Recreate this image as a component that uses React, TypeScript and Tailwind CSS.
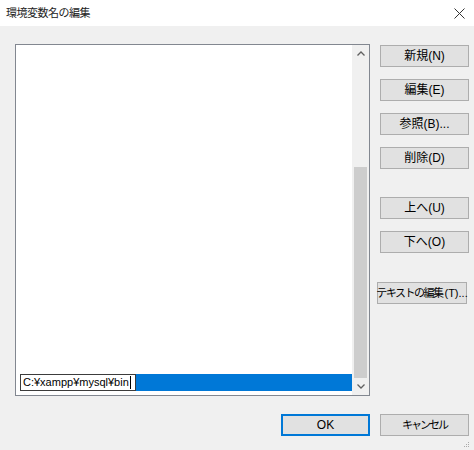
const font = { fontFamily: '"Liberation Sans", "Noto Sans CJK JP", sans-serif' };

const Btn = ({ children, className = "" }: { children: React.ReactNode; className?: string }) => (
  <div
    className={`h-[22px] flex items-center justify-center whitespace-nowrap bg-[#e1e1e1] border border-[#adadad] text-[12px] text-[#000] leading-none ${className}`}
  >
    {children}
  </div>
);

export default function App() {
  return (
    <div className="w-[474px] h-[450px] flex flex-col bg-[#f0f0f0] text-black" style={font}>
      <div className="h-[26px] bg-white flex items-center justify-between pl-[6px] pr-[9px] shrink-0">
        <span className="text-[11px] tracking-[-0.5px] text-[#222]">環境変数名の編集</span>
        <svg width="11" height="11" viewBox="0 0 11 11">
          <path d="M0.5 0.5 L10.5 10.5 M10.5 0.5 L0.5 10.5" stroke="#333" strokeWidth="1" />
        </svg>
      </div>

      <div className="flex-1 flex flex-col pl-[15px]">
        <div className="flex pt-[18px]">
          {/* list */}
          <div className="w-[355px] h-[352px] border border-[#828790] bg-white flex">
            <div className="flex-1 flex flex-col justify-end pb-[4px] pl-[4px]">
              <div className="h-[17px] flex items-stretch">
                <div className="w-[116px] shrink-0 border border-[#3c3c3c] bg-white flex items-center pl-[2px] text-[11px] leading-none whitespace-nowrap overflow-hidden">
                  C:¥xampp¥mysql¥bin
                  <span className="w-px h-[13px] bg-black ml-[1px] shrink-0" />
                </div>
                <div className="flex-1 bg-[#0078d7]" />
              </div>
            </div>
            <div className="w-[17px] bg-[#f0f0f0] flex flex-col">
              <div className="h-[17px] flex items-center justify-center">
                <svg width="8" height="5" viewBox="0 0 8 5">
                  <path d="M0.5 4.5 L4 1 L7.5 4.5" stroke="#606060" strokeWidth="1.3" fill="none" />
                </svg>
              </div>
              <div className="flex-1 flex flex-col px-[2px]">
                <div className="h-[105px]" />
                <div className="flex-1 bg-[#cdcdcd]" />
              </div>
              <div className="h-[17px] flex items-center justify-center">
                <svg width="8" height="5" viewBox="0 0 8 5">
                  <path d="M0.5 0.5 L4 4 L7.5 0.5" stroke="#606060" strokeWidth="1.3" fill="none" />
                </svg>
              </div>
            </div>
          </div>

          {/* buttons */}
          <div className="flex flex-col ml-[10px] pt-px">
            <Btn className="w-[89px]">新規(N)</Btn>
            <Btn className="w-[89px] mt-[12px]">編集(E)</Btn>
            <Btn className="w-[89px] mt-[12px]">参照(B)...</Btn>
            <Btn className="w-[89px] mt-[12px]">削除(D)</Btn>
            <Btn className="w-[89px] mt-[28px]">上へ(U)</Btn>
            <Btn className="w-[89px] mt-[12px]">下へ(O)</Btn>
            <Btn className="w-[90px] -ml-[3px] mt-[29px]">
              <span className="text-[11px] tracking-[-1.5px]">テキストの編集</span>
              <span className="ml-[2px] text-[11px]">(T)...</span>
            </Btn>
          </div>
        </div>

        <div className="flex justify-end pr-[5px] mt-[18px] gap-[10px]">
          <div className="w-[89px] h-[22px] flex items-center justify-center bg-[#e1e1e1] border-2 border-[#0078d7] text-[12px] leading-none">
            OK
          </div>
          <Btn className="w-[89px]">
            <span className="text-[11px] tracking-[-2px]">キャンセル</span>
          </Btn>
        </div>
        <div className="flex justify-end pr-[4px] mt-[6px]">
          <svg width="6" height="6" viewBox="0 0 6 6">
            <rect x="4" y="0" width="1" height="1" fill="#aaa" />
            <rect x="2" y="2" width="1" height="1" fill="#aaa" />
            <rect x="4" y="2" width="1" height="1" fill="#aaa" />
            <rect x="0" y="4" width="1" height="1" fill="#aaa" />
            <rect x="2" y="4" width="1" height="1" fill="#aaa" />
            <rect x="4" y="4" width="1" height="1" fill="#aaa" />
          </svg>
        </div>
      </div>
    </div>
  );
}
